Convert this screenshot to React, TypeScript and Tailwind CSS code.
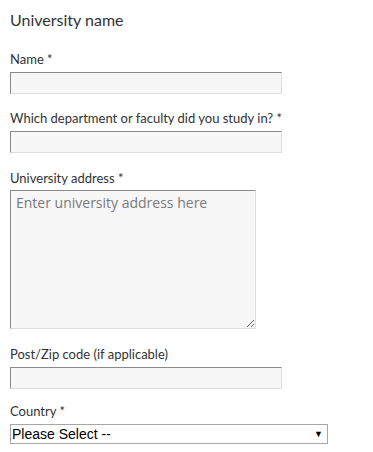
import React from "react";

const labelCls = "block text-[13px] leading-[18px] text-[#333]";
const inputCls =
  "block h-[22px] w-[272px] border border-t-[#8a8a8a] border-l-[#8a8a8a] border-b-[#dedede] border-r-[#dedede] bg-[#f7f7f7] outline-none";

export default function App() {
  return (
    <div className="min-h-[452px] w-[373px] bg-white px-[10px] pt-[9px] [font-family:Lato,'Noto_Sans',sans-serif]">
      <h2 className="text-[16px] leading-[22px] text-[#333]">University name</h2>

      <div className="mt-[19px]">
        <label className={labelCls}>Name *</label>
        <input className={`${inputCls} mt-[4px]`} />
      </div>

      <div className="mt-[15px]">
        <label className={labelCls}>Which department or faculty did you study in? *</label>
        <input className={`${inputCls} mt-[4px]`} />
      </div>

      <div className="mt-[16px]">
        <label className={labelCls}>University address *</label>
        <textarea
          placeholder="Enter university address here"
          className="mt-[3px] block h-[139px] w-[246px] border border-t-[#8a8a8a] border-l-[#8a8a8a] border-b-[#dedede] border-r-[#dedede] bg-[#f7f7f7] px-[5px] py-[2px] text-[14px] leading-[20px] text-[#333] outline-none placeholder:text-[#7a7a7a] [font-family:'Open_Sans',sans-serif]"
        />
      </div>

      <div className="mt-[16px]">
        <label className={labelCls}>Post/Zip code (if applicable)</label>
        <input className={`${inputCls} mt-[4px]`} />
      </div>

      <div className="mt-[13px]">
        <label className={labelCls}>Country *</label>
        <div className="relative mt-[4px] w-[318px]">
          <select className="block h-[20px] w-full appearance-none rounded-none border border-[#a6a6a6] bg-white pl-[1px] text-[14px] leading-[18px] text-black outline-none [font-family:'Liberation_Sans',Arial,sans-serif]">
            <option>Please Select --</option>
          </select>
          <span className="pointer-events-none absolute right-[5px] top-[4px] text-[9px] leading-[12px] text-black">▼</span>
        </div>
      </div>
    </div>
  );
}
